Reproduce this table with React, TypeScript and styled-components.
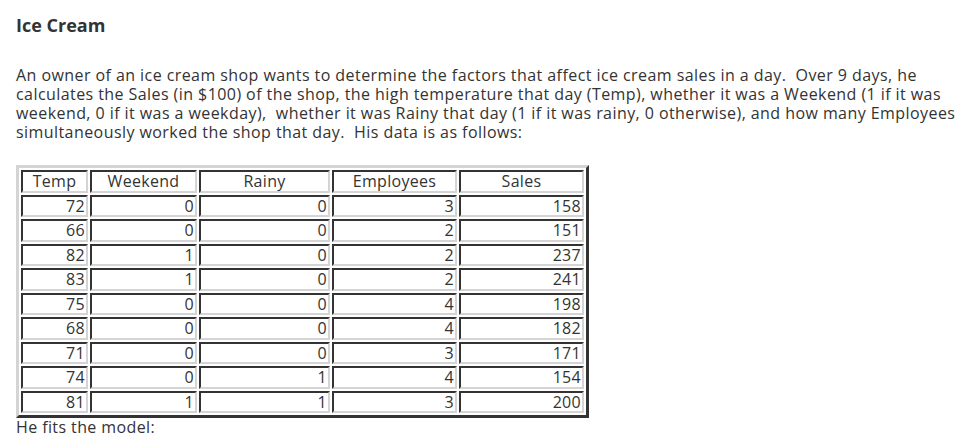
import React from 'react';
import styled, { createGlobalStyle } from 'styled-components';

const GlobalStyle = createGlobalStyle`
  html, body {
    margin: 0;
    padding: 0;
    background: #ffffff;
  }
  body {
    font-family: 'Open Sans', 'Lato', sans-serif;
    color: #333333;
  }
`;

const Page = styled.div`
  width: 980px;
  height: 448px;
  padding: 14px 16px 0 16px;
  box-sizing: border-box;
  overflow: hidden;
`;

const Title = styled.h1`
  margin: 0;
  font-size: 18px;
  font-weight: 700;
  line-height: 22px;
  color: #333333;
`;

const Paragraph = styled.p`
  margin: 30px 0 0 0;
  font-size: 16px;
  line-height: 19px;
  letter-spacing: 0.43px;
  white-space: nowrap;
`;

const DataTable = styled.table`
  margin-top: 23px;
  border-collapse: separate;
  border-spacing: 2px;
  border-style: solid;
  border-width: 3px;
  border-color: #d4d4d4 #333333 #333333 #d4d4d4;
  font-size: 16px;
  letter-spacing: 0.3px;
`;

const Cell = styled.td<{ $head?: boolean; $w: number }>`
  width: ${({ $w }) => $w}px;
  height: 22.5px;
  padding: 0 1px;
  line-height: 18px;
  text-align: ${({ $head }) => ($head ? 'center' : 'right')};
  border-style: solid;
  border-width: 2px;
  border-color: #333333 #d4d4d4 #d4d4d4 #333333;
  box-sizing: border-box;
`;

const Footer = styled.p`
  margin: 0;
  font-size: 16px;
  line-height: 19px;
  letter-spacing: 0.4px;
`;

const widths = [67, 107, 131, 125, 125];
const headers = ['Temp', 'Weekend', 'Rainy', 'Employees', 'Sales'];
const rows = [
  [72, 0, 0, 3, 158],
  [66, 0, 0, 2, 151],
  [82, 1, 0, 2, 237],
  [83, 1, 0, 2, 241],
  [75, 0, 0, 4, 198],
  [68, 0, 0, 4, 182],
  [71, 0, 0, 3, 171],
  [74, 0, 1, 4, 154],
  [81, 1, 1, 3, 200],
];

const App: React.FC = () => {
  return (
    <>
      <GlobalStyle />
      <Page>
        <Title>Ice Cream</Title>
        <Paragraph>
          An owner of an ice cream shop wants to determine the factors that affect ice cream sales in a day.&nbsp; Over 9 days, he
          <br />
          calculates the Sales (in $100) of the shop, the high temperature that day (Temp), whether it was a Weekend (1 if it was
          <br />
          weekend, 0 if it was a weekday),&nbsp; whether it was Rainy that day (1 if it was rainy, 0 otherwise), and how many Employees
          <br />
          simultaneously worked the shop that day.&nbsp; His data is as follows:
        </Paragraph>
        <DataTable>
          <tbody>
            <tr>
              {headers.map((h, i) => (
                <Cell key={h} $head $w={widths[i]}>
                  {h}
                </Cell>
              ))}
            </tr>
            {rows.map((row, r) => (
              <tr key={r}>
                {row.map((v, i) => (
                  <Cell key={i} $w={widths[i]}>
                    {v}
                  </Cell>
                ))}
              </tr>
            ))}
          </tbody>
        </DataTable>
        <Footer>He fits the model:</Footer>
      </Page>
    </>
  );
};

export default App;
